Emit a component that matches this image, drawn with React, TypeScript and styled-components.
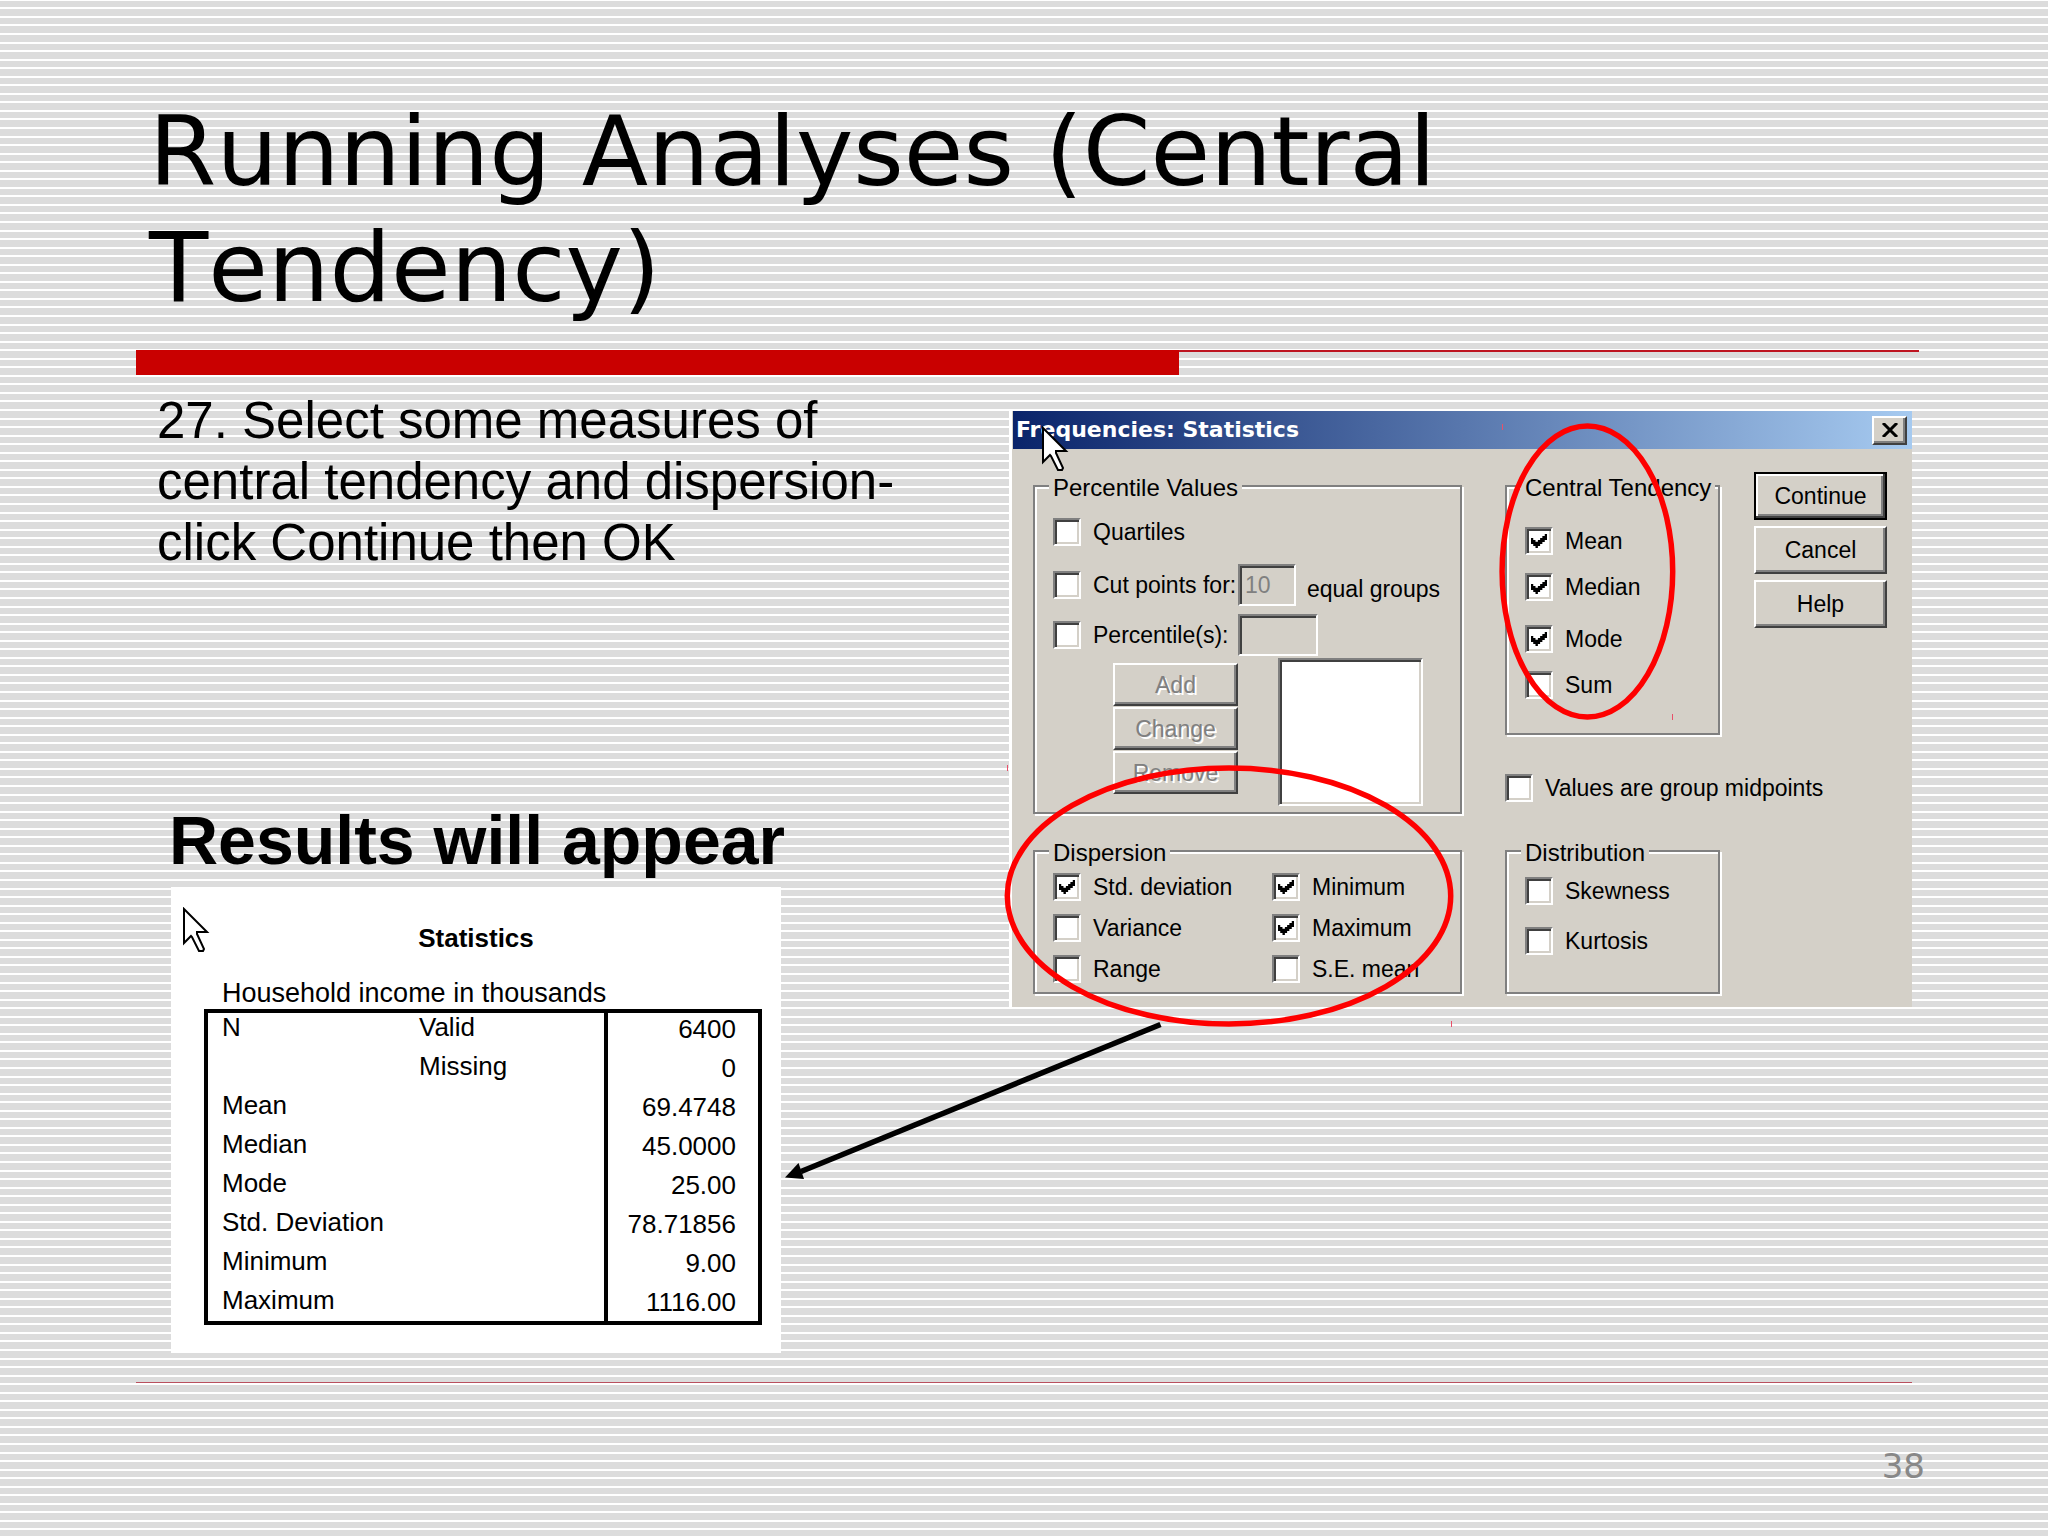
import React from "react";
import styled, { createGlobalStyle, css } from "styled-components";

const FACE = "#d4d0c8";
const SHADE = "#808080";
const DARK = "#404040";
const RED = "#fe0000";
const UI_FONT = '"Liberation Sans", Arial, sans-serif';
const SLIDE_FONT = '"DejaVu Sans", Verdana, sans-serif';

/* Tops of the white pinstripes inside one repeating tile. */
const STRIPE_TILE = 94;
const STRIPES = [7, 16, 24, 33, 42, 50, 59, 67, 76, 84];
const PAPER = "#dcdcdc";
const stripeStops = [
  "#fff 0",
  "#fff 1px",
  ...STRIPES.flatMap((y) => [
    `${PAPER} 0`,
    `${PAPER} ${y}px`,
    "#fff 0",
    `#fff ${y + 2}px`,
  ]),
  `${PAPER} 0`,
  `${PAPER} ${STRIPE_TILE - 1}px`,
  "#fff 0",
].join(", ");

const GlobalStyle = createGlobalStyle`
  * { box-sizing: border-box; }
  body {
    margin: 0;
    background: ${PAPER};
    color: #000;
    font-family: ${UI_FONT};
  }
`;

const Slide = styled.main`
  min-height: 100vh;
  padding: 94px 0 50px 136px;
  background: linear-gradient(${stripeStops}) 0 0 / 100% ${STRIPE_TILE}px;
`;

const Title = styled.h1`
  max-width: 1700px;
  margin: 0 0 24px;
  padding-left: 13px;
  font: 400 97px/116px ${SLIDE_FONT};
  font-kerning: none;
`;

const TitleRule = styled.div`
  height: 25px;
  margin-right: 129px;
  background:
    linear-gradient(#c90000, #c90000) 0 0 / 1043px 100% no-repeat,
    linear-gradient(#be1521, #be1521) 0 0 / 100% 2px no-repeat;
`;

const Columns = styled.div`
  display: grid;
  grid-template-columns: minmax(0, 873fr) minmax(0, 903fr);
  align-items: start;
  margin-right: 136px;
`;

const Notes = styled.section`
  padding-top: 15px;
`;

const Step = styled.p`
  max-width: 780px;
  margin: 0 0 227px;
  padding-left: 21px;
  font-size: 51px;
  line-height: 61px;
`;

const ResultsHeading = styled.h2`
  margin: 0 0 7px;
  padding-left: 33px;
  font-size: 68px;
  line-height: 80px;
`;

/* ---------- output panel ---------- */

const Output = styled.figure`
  position: relative;
  width: 610px;
  margin: 0 0 0 35px;
  padding: 36px 0 28px;
  background: #fff;
`;

const OutputTitle = styled.h3`
  margin: 0 0 25px;
  font-size: 26px;
  line-height: 30px;
  text-align: center;
`;

const OutputCaption = styled.figcaption`
  padding: 0 0 1px 51px;
  font-size: 27px;
  line-height: 30px;
`;

const Table = styled.table`
  width: calc(100% - 52px);
  margin-left: 33px;
  table-layout: fixed;
  border: 4px solid #000;
  border-collapse: separate;
  border-spacing: 0;
  font-size: 26px;
  line-height: 29px;
`;

const Col = styled.col<{ $w: number }>`
  width: ${(p) => p.$w}px;
`;

const Row = styled.tr`
  height: 39px;
  &:first-child {
    height: 35px;
  }
`;

const Head = styled.th<{ $sub?: boolean }>`
  padding: 0 0 6px ${(p) => (p.$sub ? 0 : 14)}px;
  font-weight: 400;
  text-align: left;
  vertical-align: bottom;
`;

const Value = styled.td`
  padding: 0 22px 4px 0;
  border-left: 4px solid #000;
  text-align: right;
  vertical-align: bottom;
`;

/* ---------- dialog ---------- */

const Dialog = styled.section`
  position: relative;
  margin-top: 36px;
  border-left: 3px solid #fff;
  background: ${FACE};
`;

const TitleBar = styled.header`
  display: flex;
  align-items: center;
  justify-content: space-between;
  height: 38px;
  margin-left: 1px;
  padding: 0 5px 0 3px;
  background: linear-gradient(to right, #0a246a, #a6caf0);
`;

const DialogTitle = styled.h2`
  margin: 0;
  color: #fff;
  font: 700 22px/30px ${SLIDE_FONT};
`;

const DialogBody = styled.form`
  display: grid;
  grid-template-columns: minmax(0, 438fr) minmax(0, 215fr) minmax(0, 133fr);
  column-gap: 34px;
  padding: 21px 25px 13px 21px;
  font-size: 23px;
  line-height: 28px;
`;

const WideColumn = styled.div`
  display: flex;
  flex-direction: column;
  gap: 21px;
  padding-right: 9px;
`;

const NarrowColumn = styled.div`
  display: flex;
  flex-direction: column;
  justify-content: space-between;
`;

const ButtonColumn = styled.div`
  display: flex;
  flex-direction: column;
  gap: 6px;
  padding-top: 2px;
`;

const Group = styled.fieldset`
  min-width: 0;
  margin: 0;
  padding: 0 14px;
  border: 2px solid ${SHADE};
  box-shadow: 2px 2px 0 #fff, inset 2px 2px 0 #fff;
`;

const Legend = styled.legend`
  padding: 4px 4px 0;
  background: ${FACE};
  font-size: 24px;
  line-height: 28px;
  white-space: nowrap;
`;

const Stack = styled.div<{ $gap: number; $top?: number; $bottom?: number }>`
  display: flex;
  flex-direction: column;
  gap: ${(p) => p.$gap}px;
  padding: ${(p) => p.$top ?? 0}px 0 ${(p) => p.$bottom ?? 0}px;
`;

const Indent = styled.div`
  padding-left: 4px;
`;

const Pair = styled.div`
  display: grid;
  grid-template-columns: 219px 1fr;
`;

const FieldRow = styled.div`
  display: flex;
  align-items: center;
  height: 42px;
  & > label:first-child {
    flex: 0 0 185px;
  }
`;

const CheckLabel = styled.label`
  display: flex;
  align-items: center;
  gap: 12px;
  height: 28px;
  white-space: nowrap;
`;

const sunken = css`
  border: 2px solid;
  border-color: ${SHADE} #fff #fff ${SHADE};
  border-radius: 0;
  box-shadow: inset 2px 2px 0 ${DARK}, inset -2px -2px 0 ${FACE};
`;

const CheckBox = styled.input`
  appearance: none;
  display: grid;
  place-items: center;
  flex: none;
  width: 28px;
  height: 28px;
  margin: 0;
  background: #fff;
  ${sunken}

  &:checked::before {
    content: "";
    width: 16px;
    height: 14px;
    background: #000;
    clip-path: polygon(
      0% 28%, 14% 28%, 14% 42%, 28% 42%, 28% 56%, 43% 56%, 43% 42%, 57% 42%,
      57% 28%, 71% 28%, 71% 14%, 86% 14%, 86% 0%, 100% 0%, 100% 43%, 86% 43%,
      86% 57%, 71% 57%, 71% 71%, 57% 71%, 57% 86%, 43% 86%, 43% 100%,
      28% 100%, 28% 86%, 14% 86%, 14% 71%, 0% 71%
    );
  }
`;

const Field = styled.input<{ $w: number }>`
  width: ${(p) => p.$w}px;
  height: 42px;
  margin: 0;
  padding: 0 0 0 5px;
  background: ${FACE};
  color: ${SHADE};
  font: 23px/28px ${UI_FONT};
  ${sunken}
`;

const FieldSuffix = styled.span`
  padding: 8px 0 0 11px;
  white-space: nowrap;
`;

const Actions = styled.div`
  display: flex;
  gap: 40px;
  padding: 2px 0 6px 60px;
`;

const ActionButtons = styled.div`
  display: flex;
  flex-direction: column;
  gap: 1px;
  width: 125px;
  padding-top: 5px;
`;

const ListBox = styled.select`
  appearance: none;
  width: 145px;
  height: 148px;
  margin: 0;
  background: #fff;
  opacity: 1;
  ${sunken}
`;

const Standalone = styled.div`
  padding-top: 6px;
`;

const Button = styled.button<{ $h: number; $primary?: boolean }>`
  height: ${(p) => p.$h}px;
  padding: 0;
  border: 2px solid;
  border-color: #fff ${DARK} ${DARK} #fff;
  border-radius: 0;
  background: ${FACE};
  box-shadow: inset -2px -2px 0 ${SHADE};
  color: #000;
  font: 23px/28px ${UI_FONT};

  &:disabled {
    color: ${SHADE};
    text-shadow: 2px 2px 0 #fff;
  }

  ${(p) =>
    p.$primary &&
    css`
      border-color: #000;
      box-shadow: inset -2px -2px 0 ${DARK}, inset 2px 2px 0 #fff,
        inset -4px -4px 0 ${SHADE};
    `}
`;

const CloseButton = styled(Button)`
  display: grid;
  place-items: center;
  width: 35px;
`;

/* ---------- drawings over the content ---------- */

const Pointer = styled.svg<{ $x: number; $y: number }>`
  position: absolute;
  left: ${(p) => p.$x}px;
  top: ${(p) => p.$y}px;
  width: 28px;
  height: 46px;
`;

const Markup = styled.svg`
  position: absolute;
  left: 0;
  top: 0;
  width: 900px;
  height: 596px;
  overflow: visible;
  pointer-events: none;
`;

const Footer = styled.footer`
  margin-top: 29px;
`;

const FooterRule = styled.hr`
  height: 1px;
  margin: 0 136px 63px 0;
  border: 0;
  background: #b9505e;
`;

const PageNumber = styled.p`
  margin: 0;
  padding-right: 123px;
  color: #888;
  font: 34px/40px ${SLIDE_FONT};
  text-align: right;
`;

function Cursor({ x, y, weight }: { x: number; y: number; weight: number }) {
  return (
    <Pointer $x={x} $y={y} viewBox="0 0 28 46" aria-hidden="true">
      <path
        d="M2 2V36L9 29L10 30L17 44H21L22 42L15 27V25H25Z"
        fill="#fff"
        stroke="#000"
        strokeWidth={weight}
      />
    </Pointer>
  );
}

function Check({ label, on }: { label: string; on?: boolean }) {
  return (
    <CheckLabel>
      <CheckBox type="checkbox" defaultChecked={on} />
      <span>{label}</span>
    </CheckLabel>
  );
}

const RESULTS: { label: string; sub?: string; value: string }[] = [
  { label: "N", sub: "Valid", value: "6400" },
  { label: "", sub: "Missing", value: "0" },
  { label: "Mean", value: "69.4748" },
  { label: "Median", value: "45.0000" },
  { label: "Mode", value: "25.00" },
  { label: "Std. Deviation", value: "78.71856" },
  { label: "Minimum", value: "9.00" },
  { label: "Maximum", value: "1116.00" },
];

function ResultsPanel() {
  return (
    <Output>
      <OutputTitle>Statistics</OutputTitle>
      <OutputCaption>Household income in thousands</OutputCaption>
      <Table>
        <colgroup>
          <Col $w={211} />
          <Col $w={185} />
          <Col $w={154} />
        </colgroup>
        <tbody>
          {RESULTS.map((r) => (
            <Row key={r.label + r.value}>
              {r.sub ? (
                <>
                  <Head>{r.label}</Head>
                  <Head $sub>{r.sub}</Head>
                </>
              ) : (
                <Head colSpan={2}>{r.label}</Head>
              )}
              <Value>{r.value}</Value>
            </Row>
          ))}
        </tbody>
      </Table>
      <Cursor x={11} y={20} weight={2} />
    </Output>
  );
}

function FrequenciesDialog() {
  return (
    <Dialog aria-label="Frequencies: Statistics">
      <TitleBar>
        <DialogTitle>Frequencies: Statistics</DialogTitle>
        <CloseButton type="button" $h={29} aria-label="Close">
          <svg width="18" height="14" viewBox="0 0 18 14" aria-hidden="true">
            <path d="M2 0L16 14M16 0L2 14" stroke="#000" strokeWidth="3" />
          </svg>
        </CloseButton>
      </TitleBar>
      <DialogBody onSubmit={(e) => e.preventDefault()}>
        <WideColumn>
          <Group>
            <Legend>Percentile Values</Legend>
            <Indent>
              <Stack $gap={18} $top={16}>
                <Check label="Quartiles" />
                <Stack $gap={8}>
                  <FieldRow>
                    <Check label="Cut points for:" />
                    <Field
                      $w={58}
                      defaultValue="10"
                      disabled
                      aria-label="Number of equal groups"
                    />
                    <FieldSuffix>equal groups</FieldSuffix>
                  </FieldRow>
                  <FieldRow>
                    <Check label="Percentile(s):" />
                    <Field $w={80} disabled aria-label="Percentile" />
                  </FieldRow>
                </Stack>
              </Stack>
              <Actions>
                <ActionButtons>
                  <Button type="button" $h={43} disabled>
                    Add
                  </Button>
                  <Button type="button" $h={43} disabled>
                    Change
                  </Button>
                  <Button type="button" $h={43} disabled>
                    Remove
                  </Button>
                </ActionButtons>
                <ListBox size={5} disabled aria-label="Percentile list" />
              </Actions>
            </Indent>
          </Group>
          <Group>
            <Legend>Dispersion</Legend>
            <Indent>
              <Pair>
                <Stack $gap={13} $top={6} $bottom={9}>
                  <Check label="Std. deviation" on />
                  <Check label="Variance" />
                  <Check label="Range" />
                </Stack>
                <Stack $gap={13} $top={6} $bottom={9}>
                  <Check label="Minimum" on />
                  <Check label="Maximum" on />
                  <Check label="S.E. mean" />
                </Stack>
              </Pair>
            </Indent>
          </Group>
        </WideColumn>
        <NarrowColumn>
          <Group>
            <Legend>Central Tendency</Legend>
            <Indent>
              <Stack $gap={24} $top={25} $bottom={34}>
                <Stack $gap={18}>
                  <Check label="Mean" on />
                  <Check label="Median" on />
                </Stack>
                <Stack $gap={18}>
                  <Check label="Mode" on />
                  <Check label="Sum" />
                </Stack>
              </Stack>
            </Indent>
          </Group>
          <Standalone>
            <Check label="Values are group midpoints" />
          </Standalone>
          <Group>
            <Legend>Distribution</Legend>
            <Indent>
              <Stack $gap={22} $top={10} $bottom={37}>
                <Check label="Skewness" />
                <Check label="Kurtosis" />
              </Stack>
            </Indent>
          </Group>
        </NarrowColumn>
        <ButtonColumn>
          <Button type="submit" $h={48} $primary>
            Continue
          </Button>
          <Button type="button" $h={48}>
            Cancel
          </Button>
          <Button type="button" $h={48}>
            Help
          </Button>
        </ButtonColumn>
      </DialogBody>
      <Cursor x={29} y={15} weight={2} />
      <Markup viewBox="0 0 900 596" aria-hidden="true">
        <g fill="none" stroke={RED} strokeWidth="5.5">
          <ellipse cx="217" cy="485" rx="221.7" ry="128" />
          <ellipse cx="575.4" cy="160.5" rx="85.3" ry="145.5" />
        </g>
        <path
          d="M-4.500 354v6M439.500 610v6M490.500 13v6M660.500 303v6"
          stroke="#e8506a"
        />
        <path d="M148.500 613.500L-211 760.500" stroke="#000" strokeWidth="5.500" />
        <path d="M-227 766.500L-213.500 752L-208 768Z" />
      </Markup>
    </Dialog>
  );
}

export default function App() {
  return (
    <>
      <GlobalStyle />
      <Slide>
        <Title>Running Analyses (Central Tendency)</Title>
        <TitleRule />
        <Columns>
          <Notes>
            <Step>
              27. Select some measures of central tendency and dispersion- click
              Continue then OK
            </Step>
            <ResultsHeading>Results will appear</ResultsHeading>
            <ResultsPanel />
          </Notes>
          <FrequenciesDialog />
        </Columns>
        <Footer>
          <FooterRule />
          <PageNumber>38</PageNumber>
        </Footer>
      </Slide>
    </>
  );
}
